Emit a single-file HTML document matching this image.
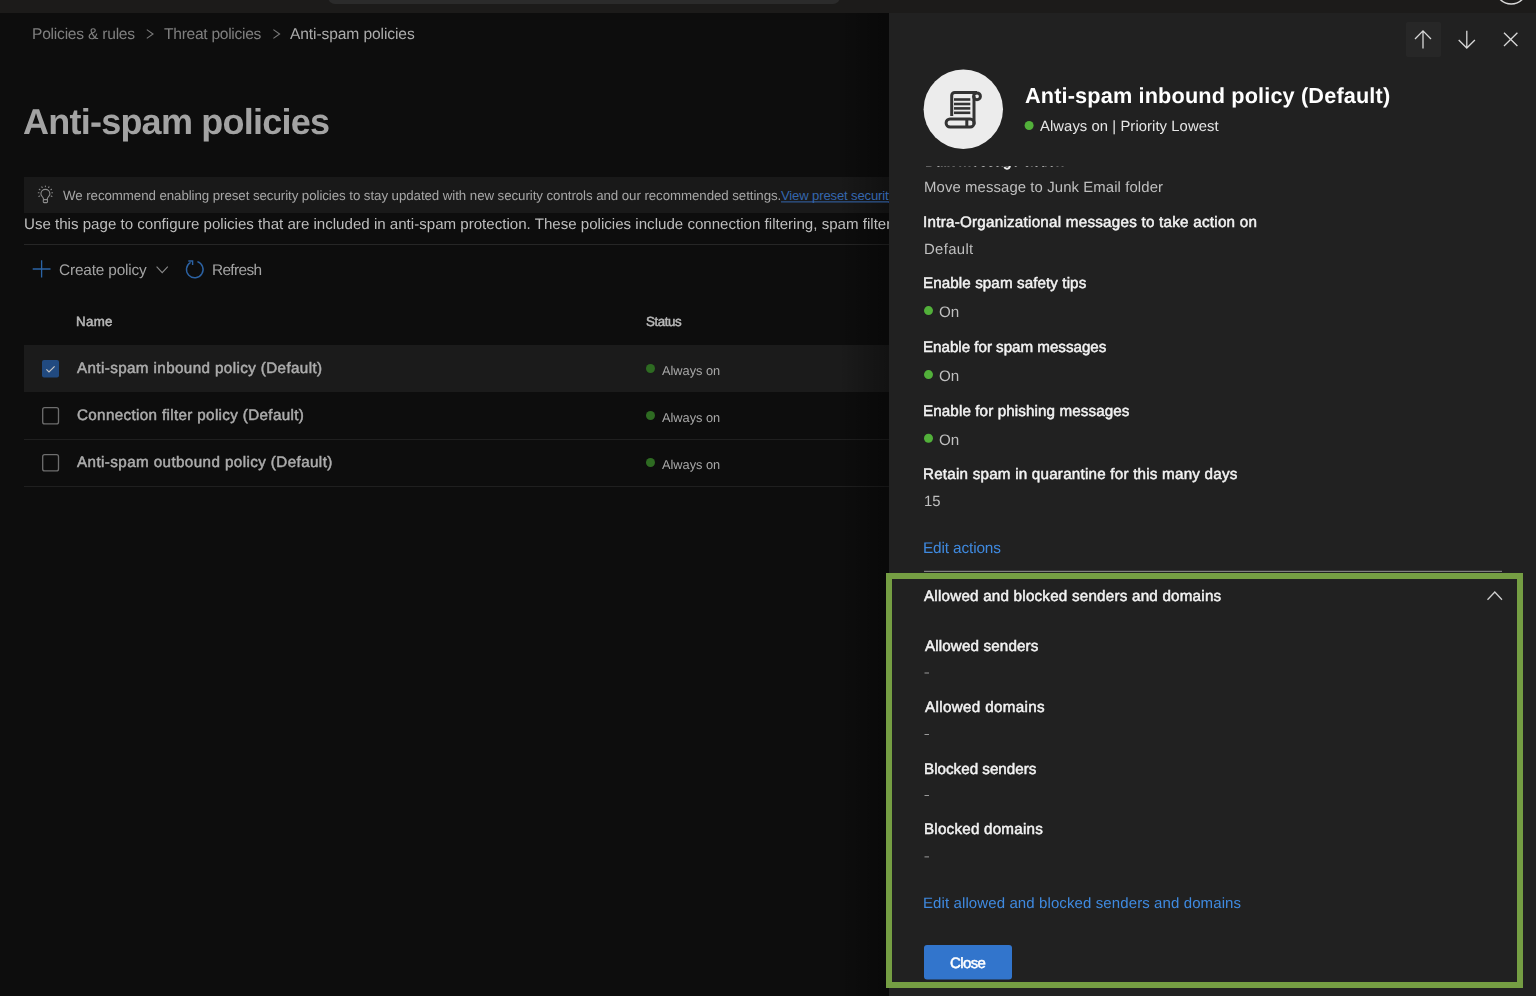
<!DOCTYPE html>
<html><head><meta charset="utf-8">
<style>
html,body{margin:0;padding:0;}
body{width:1536px;height:996px;overflow:hidden;position:relative;background:#0d0d0d;font-family:"Liberation Sans",sans-serif;}
.t{position:absolute;white-space:nowrap;will-change:transform;text-rendering:geometricPrecision;}
.abs{position:absolute;}
svg{overflow:visible;}
</style></head><body>
<!-- top bar -->
<div class="abs" style="left:0;top:0;width:1536px;height:13px;background:#1c1b1a;"></div>
<div class="abs" style="left:328px;top:-10px;width:512px;height:14px;background:#2b2b2b;border-radius:0 0 7px 7px;"></div>
<svg class="abs" style="left:1490px;top:0" width="46" height="13"><circle cx="21.2" cy="-11.6" r="15.6" stroke="#d8d8d8" stroke-width="1.5" fill="none"/></svg>

<!-- left page -->
<div class="abs" style="left:0;top:13px;width:889px;height:983px;overflow:hidden;">
 <div class="abs" style="left:0;top:-13px;width:889px;height:996px;">
 <div class="abs" style="left:24px;top:177px;width:865px;height:36px;background:#191919;"></div>
 <div class="abs" style="left:24px;top:244px;width:865px;height:1px;background:#262626;"></div>
 <div class="abs" style="left:24px;top:345px;width:865px;height:47px;background:#1b1b1b;"></div>
 <div class="abs" style="left:24px;top:439px;width:865px;height:1px;background:#1f1f1f;"></div>
 <div class="abs" style="left:24px;top:486px;width:865px;height:1px;background:#1f1f1f;"></div>
 <div class="abs" style="left:839px;top:13px;width:50px;height:983px;background:linear-gradient(to right,rgba(0,0,0,0),rgba(0,0,0,0.35));"></div>
 <svg class="abs" style="left:0;top:0" width="889" height="996">
  <path d="M146.8 29.6 L153 34 L146.8 38.4 M273.4 29.6 L279.6 34 L273.4 38.4" stroke="#7a7a7a" stroke-width="1.1" fill="none"/>
  <!-- bulb -->
  <g stroke="#8c8c8c" stroke-width="1.1" fill="none" stroke-linecap="round">
   <path d="M43.4 199.6 V198.6 C43.4 197.2 40.9 196 40.9 193.9 A4.5 4.5 0 0 1 49.9 193.9 C49.9 196 47.4 197.2 47.4 198.6 V199.6"/>
   <rect x="43.3" y="199.6" width="4.2" height="3" rx="0.8"/>
   <path d="M45.4 186 V186.6 M41.8 186.9 L42.2 187.5 M49 186.9 L48.6 187.5 M39.3 189.3 L39.9 189.7 M51.5 189.3 L50.9 189.7 M38.3 192.8 H39 M52.5 192.8 H51.8 M38.8 196.4 L39.6 196.1 M52 196.4 L51.2 196.1"/>
  </g>
  <!-- link -->
  <text x="781" y="199.7" font-family="Liberation Sans" font-size="13.1" fill="#3567ad" textLength="160">View preset security policies</text>
  <path d="M781 201.9 H889" stroke="#3567ad" stroke-width="1"/>
  <!-- plus -->
  <path d="M41.6 260.3 V277.6 M32.7 269 H50.5" stroke="#2b64a6" stroke-width="1.3" fill="none"/>
  <!-- chevron down -->
  <path d="M156.6 266.6 L162.2 272.6 L167.8 266.6" stroke="#8a8a8a" stroke-width="1.1" fill="none"/>
  <!-- refresh -->
  <path d="M197.4 261.6 A8.3 8.3 0 1 1 190.6 262.3" stroke="#2c62a3" stroke-width="1.4" fill="none"/>
  <path d="M188.3 261 H192.6 V265" stroke="#2c62a3" stroke-width="1.4" fill="none"/>
  <!-- checkboxes -->
  <rect x="42" y="360" width="17" height="17.4" rx="2" fill="#214a80"/>
  <path d="M46.4 369.4 L49 371.9 L54.6 366.4" stroke="#c4c4c4" stroke-width="1.2" fill="none"/>
  <rect x="42.7" y="407.7" width="15.8" height="16.2" rx="2" fill="none" stroke="#6e6e6e" stroke-width="1.3"/>
  <rect x="42.7" y="454.7" width="15.8" height="16.2" rx="2" fill="none" stroke="#6e6e6e" stroke-width="1.3"/>
  <!-- status dots -->
  <circle cx="650.5" cy="368.5" r="4.5" fill="#2e6b22"/>
  <circle cx="650.5" cy="415.5" r="4.5" fill="#2e6b22"/>
  <circle cx="650.5" cy="462.5" r="4.5" fill="#2e6b22"/>
 </svg>
<div id="bc1" class="t" style="left:32.00px;top:24.19px;font-size:15.60px;line-height:22px;font-weight:normal;color:#7f7f7f;letter-spacing:-0.233px;">Policies &amp; rules</div>
<div id="bc2" class="t" style="left:164.20px;top:24.19px;font-size:15.60px;line-height:22px;font-weight:normal;color:#7f7f7f;letter-spacing:-0.286px;">Threat policies</div>
<div id="bc3" class="t" style="left:290.40px;top:24.19px;font-size:15.60px;line-height:22px;font-weight:normal;color:#ababab;letter-spacing:-0.106px;">Anti-spam policies</div>
<div id="title" class="t" style="left:22.80px;top:96.53px;font-size:36.00px;line-height:50px;font-weight:bold;color:#a3a3a3;letter-spacing:-0.765px;">Anti-spam policies</div>
<div id="notice" class="t" style="left:63.40px;top:185.69px;font-size:13.30px;line-height:19px;font-weight:normal;color:#a6a6a6;letter-spacing:-0.068px;">We recommend enabling preset security policies to stay updated with new security controls and our recommended settings.</div>
<div id="desc" class="t" style="left:24.00px;top:214.27px;font-size:15.10px;line-height:21px;font-weight:normal;color:#bdbdbd;letter-spacing:0.000px;">Use this page to configure policies that are included in anti-spam protection. These policies include connection filtering, spam filtering</div>
<div id="create" class="t" style="left:59.20px;top:260.26px;font-size:15.40px;line-height:22px;font-weight:normal;color:#a3a3a3;letter-spacing:-0.175px;">Create policy</div>
<div id="refresh" class="t" style="left:212.00px;top:260.26px;font-size:15.40px;line-height:22px;font-weight:normal;color:#a3a3a3;letter-spacing:-0.650px;">Refresh</div>
<div id="hname" class="t" style="left:76.40px;top:312.49px;font-size:13.30px;line-height:19px;font-weight:normal;color:#b8b8b8;letter-spacing:0.333px;-webkit-text-stroke:0.5px #b8b8b8;">Name</div>
<div id="hstatus" class="t" style="left:645.80px;top:312.09px;font-size:13.30px;line-height:19px;font-weight:normal;color:#b8b8b8;letter-spacing:-0.400px;-webkit-text-stroke:0.5px #b8b8b8;">Status</div>
<div id="r1" class="t" style="left:77.40px;top:358.23px;font-size:15.20px;line-height:21px;font-weight:normal;color:#acacac;letter-spacing:0.394px;-webkit-text-stroke:0.5px #acacac;">Anti-spam inbound policy (Default)</div>
<div id="r2" class="t" style="left:77.40px;top:405.23px;font-size:15.20px;line-height:21px;font-weight:normal;color:#acacac;letter-spacing:0.352px;-webkit-text-stroke:0.5px #acacac;">Connection filter policy (Default)</div>
<div id="r3" class="t" style="left:77.40px;top:452.23px;font-size:15.20px;line-height:21px;font-weight:normal;color:#acacac;letter-spacing:0.409px;-webkit-text-stroke:0.5px #acacac;">Anti-spam outbound policy (Default)</div>
<div id="st0" class="t" style="left:661.80px;top:361.76px;font-size:12.80px;line-height:18px;font-weight:normal;color:#a8a8a8;letter-spacing:-0.025px;">Always on</div>
<div id="st1" class="t" style="left:661.80px;top:408.76px;font-size:12.80px;line-height:18px;font-weight:normal;color:#a8a8a8;letter-spacing:-0.025px;">Always on</div>
<div id="st2" class="t" style="left:661.80px;top:455.76px;font-size:12.80px;line-height:18px;font-weight:normal;color:#a8a8a8;letter-spacing:-0.025px;">Always on</div>
 </div>
</div>

<!-- panel -->
<div class="abs" style="left:889px;top:13px;width:647px;height:983px;background:#212121;overflow:hidden;">
 <!-- scroll body -->
 <div class="abs" style="left:0;top:153px;width:647px;height:830px;overflow:hidden;">
  <div class="abs" style="left:0;top:-153px;width:647px;height:983px;">
<div id="hidden" class="t" style="left:35.50px;top:137.73px;font-size:15.20px;line-height:21px;font-weight:normal;color:#f0f0f0;letter-spacing:-0.050px;-webkit-text-stroke:0.5px #f0f0f0;">Bulk message action</div>
<div id="v0" class="t" style="left:34.80px;top:165.34px;font-size:14.90px;line-height:21px;font-weight:normal;color:#bfbfbf;letter-spacing:0.097px;">Move message to Junk Email folder</div>
<div id="l1" class="t" style="left:34.00px;top:199.23px;font-size:15.20px;line-height:21px;font-weight:normal;color:#f2f2f2;letter-spacing:0.248px;-webkit-text-stroke:0.5px #f2f2f2;">Intra-Organizational messages to take action on</div>
<div id="v1" class="t" style="left:34.80px;top:226.54px;font-size:14.90px;line-height:21px;font-weight:normal;color:#bfbfbf;letter-spacing:0.333px;">Default</div>
<div id="l2" class="t" style="left:34.00px;top:259.63px;font-size:15.20px;line-height:21px;font-weight:normal;color:#f2f2f2;letter-spacing:0.091px;-webkit-text-stroke:0.5px #f2f2f2;">Enable spam safety tips</div>
<div id="v2" class="t" style="left:49.80px;top:289.23px;font-size:15.20px;line-height:21px;font-weight:normal;color:#bfbfbf;letter-spacing:0.000px;">On</div>
<div id="l3" class="t" style="left:34.00px;top:324.23px;font-size:15.20px;line-height:21px;font-weight:normal;color:#f2f2f2;letter-spacing:-0.030px;-webkit-text-stroke:0.5px #f2f2f2;">Enable for spam messages</div>
<div id="v3" class="t" style="left:49.80px;top:353.23px;font-size:15.20px;line-height:21px;font-weight:normal;color:#bfbfbf;letter-spacing:0.000px;">On</div>
<div id="l4" class="t" style="left:34.00px;top:388.03px;font-size:15.20px;line-height:21px;font-weight:normal;color:#f2f2f2;letter-spacing:0.111px;-webkit-text-stroke:0.5px #f2f2f2;">Enable for phishing messages</div>
<div id="v4" class="t" style="left:49.80px;top:416.63px;font-size:15.20px;line-height:21px;font-weight:normal;color:#bfbfbf;letter-spacing:0.000px;">On</div>
<div id="l5" class="t" style="left:34.00px;top:451.43px;font-size:15.20px;line-height:21px;font-weight:normal;color:#f2f2f2;letter-spacing:0.223px;-webkit-text-stroke:0.5px #f2f2f2;">Retain spam in quarantine for this many days</div>
<div id="v5" class="t" style="left:34.80px;top:479.34px;font-size:14.90px;line-height:21px;font-weight:normal;color:#bfbfbf;letter-spacing:0.000px;">15</div>
<div id="edit1" class="t" style="left:34.40px;top:525.26px;font-size:15.40px;line-height:22px;font-weight:normal;color:#3f8ae0;letter-spacing:-0.145px;">Edit actions</div>
<div id="sec" class="t" style="left:35.20px;top:572.63px;font-size:15.20px;line-height:21px;font-weight:normal;color:#f2f2f2;letter-spacing:0.221px;-webkit-text-stroke:0.5px #f2f2f2;">Allowed and blocked senders and domains</div>
<div id="a1" class="t" style="left:35.60px;top:622.83px;font-size:15.20px;line-height:21px;font-weight:normal;color:#f2f2f2;letter-spacing:0.136px;-webkit-text-stroke:0.5px #f2f2f2;">Allowed senders</div>
<div id="a2" class="t" style="left:35.60px;top:683.83px;font-size:15.20px;line-height:21px;font-weight:normal;color:#f2f2f2;letter-spacing:0.350px;-webkit-text-stroke:0.5px #f2f2f2;">Allowed domains</div>
<div id="a3" class="t" style="left:34.60px;top:746.03px;font-size:15.20px;line-height:21px;font-weight:normal;color:#f2f2f2;letter-spacing:0.007px;-webkit-text-stroke:0.5px #f2f2f2;">Blocked senders</div>
<div id="a4" class="t" style="left:34.60px;top:806.43px;font-size:15.20px;line-height:21px;font-weight:normal;color:#f2f2f2;letter-spacing:0.221px;-webkit-text-stroke:0.5px #f2f2f2;">Blocked domains</div>
<div id="edit2" class="t" style="left:34.20px;top:879.50px;font-size:15.00px;line-height:21px;font-weight:normal;color:#3f8ae0;letter-spacing:0.105px;">Edit allowed and blocked senders and domains</div>
  <svg class="abs" style="left:0;top:0" width="647" height="983">
   <circle cx="39.5" cy="297.6" r="4.5" fill="#52b03a"/>
   <circle cx="39.5" cy="361.6" r="4.5" fill="#52b03a"/>
   <circle cx="39.5" cy="425.3" r="4.5" fill="#52b03a"/>
   <rect x="35" y="557.8" width="578" height="1.1" fill="#8c8c8c"/>
   <path d="M598.5 586.8 L605.8 579 L613 586.8" stroke="#cfcfcf" stroke-width="1.3" fill="none"/>
   <rect x="35.5" y="659.5" width="4.5" height="1" fill="#9a9a9a"/>
   <rect x="35.5" y="721" width="4.5" height="1" fill="#9a9a9a"/>
   <rect x="35.5" y="782" width="4.5" height="1" fill="#9a9a9a"/>
   <rect x="35.5" y="843.4" width="4.5" height="1" fill="#9a9a9a"/>
   <rect x="35" y="932" width="88" height="34.5" rx="3" fill="#3275cc"/>
  </svg>
<div id="close" class="t" style="left:60.80px;top:940.30px;font-size:15.00px;line-height:21px;font-weight:normal;color:#ffffff;letter-spacing:-0.600px;-webkit-text-stroke:0.5px #ffffff;">Close</div>
  </div>
 </div>
 <!-- header -->
 <svg class="abs" style="left:0;top:0" width="647" height="160">
  <rect x="517" y="9" width="35" height="35" rx="2" fill="#272727"/>
  <path d="M534 17.7 V35.4 M526 26 L534 17.9 L542 26" stroke="#d8d8d8" stroke-width="1.3" fill="none"/>
  <path d="M577.8 17.7 V35 M569.7 27 L577.8 35 L585.9 27" stroke="#d8d8d8" stroke-width="1.3" fill="none"/>
  <path d="M615 19.7 L628.4 33 M628.4 19.7 L615 33" stroke="#d8d8d8" stroke-width="1.3" fill="none"/>
  <circle cx="74.3" cy="96.2" r="39.7" fill="#ececec"/>
  <g transform="translate(55,78)" stroke="#333333" stroke-width="3" fill="none">
   <path d="M7.7 25 V4.5 A3 3 0 0 1 10.7 1.5 H33"/>
   <circle cx="33" cy="5.3" r="3.4"/>
   <path d="M30 5 V33.5"/>
   <rect x="2.1" y="28" width="28" height="8" rx="4"/>
  </g>
  <g transform="translate(55,78)" fill="#333333">
   <rect x="10" y="7.2" width="16.3" height="2.6"/>
   <rect x="10" y="11.7" width="16.3" height="2.6"/>
   <rect x="10" y="16.1" width="16.3" height="2.6"/>
   <rect x="10" y="20.5" width="16.3" height="2.6"/>
   <rect x="21.3" y="29" width="3" height="6"/>
  </g>
  <circle cx="140.1" cy="112.5" r="4.5" fill="#52b03a"/>
 </svg>
<div id="ptitle" class="t" style="left:136.00px;top:68.28px;font-size:21.70px;line-height:30px;font-weight:bold;color:#ffffff;letter-spacing:0.148px;">Anti-spam inbound policy (Default)</div>
<div id="psub" class="t" style="left:151.40px;top:104.37px;font-size:14.80px;line-height:21px;font-weight:normal;color:#e6e6e6;letter-spacing:0.077px;">Always on | Priority Lowest</div>
</div>
<!-- green highlight -->
<div class="abs" style="left:886px;top:573px;width:625px;height:403px;border:6px solid #759e43;"></div>
</body></html>
